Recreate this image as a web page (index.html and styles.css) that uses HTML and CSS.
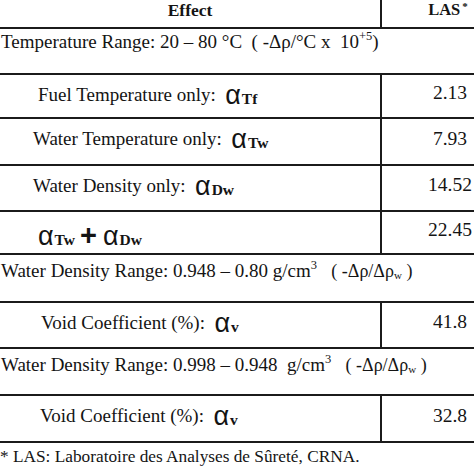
FILE: index.html
```html
<!DOCTYPE html>
<html>
<head>
<meta charset="utf-8">
<link rel="stylesheet" href="styles.css">
</head>
<body>
<div class="sheet">
  <div class="row row--head">
    <div class="cell cell--label cell--effect"><span class="txt">Effect</span></div>
    <div class="cell cell--num cell--las"><span class="txt">LAS<sup class="star">*</sup></span></div>
  </div>
  <div class="row row--span h44">
    <div class="span-text pt2">Temperature Range: 20 – 80 °C&nbsp; ( -Δρ/°C x&nbsp; 10<sup class="exp">+5</sup>)</div>
  </div>
  <div class="row h42">
    <div class="cell cell--label in38 fuel"><span class="txt">Fuel Temperature only:&nbsp;&nbsp;<span class="alpha">α</span><span class="idx">Tf</span></span></div>
    <div class="cell cell--num"><span class="txt">2.13</span></div>
  </div>
  <div class="row h45">
    <div class="cell cell--label in33"><span class="txt">Water Temperature only:&nbsp;&nbsp;<span class="alpha">α</span><span class="idx">Tw</span></span></div>
    <div class="cell cell--num"><span class="txt">7.93</span></div>
  </div>
  <div class="row h44">
    <div class="cell cell--label in33"><span class="txt">Water Density only:&nbsp;&nbsp;<span class="alpha">α</span><span class="idx">Dw</span></span></div>
    <div class="cell cell--num"><span class="txt">14.52</span></div>
  </div>
  <div class="row h41">
    <div class="cell cell--label in38 low"><span class="txt"><span class="alpha">α</span><span class="idx">Tw</span><span class="plus">+</span><span class="alpha">α</span><span class="idx">Dw</span></span></div>
    <div class="cell cell--num"><span class="txt">22.45</span></div>
  </div>
  <div class="row row--span h46">
    <div class="span-text pt5">Water Density Range: 0.948 – 0.80 g/cm<sup class="exp">3</sup>&nbsp;&nbsp; <span class="paren">( -Δρ/Δρ<sub class="w">w</sub> )</span></div>
  </div>
  <div class="row h44">
    <div class="cell cell--label in41"><span class="txt">Void Coefficient (%):&nbsp;&nbsp;<span class="alpha">α</span><span class="idx">v</span></span></div>
    <div class="cell cell--num"><span class="txt">41.8</span></div>
  </div>
  <div class="row row--span h45">
    <div class="span-text pt5">Water Density Range: 0.998 – 0.948&nbsp; g/cm<sup class="exp">3</sup>&nbsp;&nbsp; <span class="paren">( -Δρ/Δρ<sub class="w">w</sub> )</span></div>
  </div>
  <div class="row h45">
    <div class="cell cell--label in40"><span class="txt">Void Coefficient (%):&nbsp;&nbsp;<span class="alpha">α</span><span class="idx">v</span></span></div>
    <div class="cell cell--num"><span class="txt">32.8</span></div>
  </div>
  <div class="foot">* LAS: Laboratoire des Analyses de Sûreté, CRNA.</div>
</div>
</body>
</html>
```

FILE: styles.css
```css
html, body {
  margin: 0;
  padding: 0;
  background: #ffffff;
  overflow: hidden;
}

body {
  width: 474px;
  height: 470px;
  font-family: "Liberation Serif", "Times New Roman", serif;
  color: #141414;
}

.sheet {
  width: 518px;
}

.row {
  display: flex;
  border-bottom: 2px solid #1b1b1b;
  box-sizing: content-box;
}

.row--head { height: 27px; }
.h41 { height: 41px; }
.h42 { height: 42px; }
.h44 { height: 44px; }
.h45 { height: 45px; }
.h46 { height: 46px; }

.cell {
  display: flex;
  align-items: center;
  font-size: 19px;
  line-height: 22px;
  white-space: nowrap;
}

.txt {
  display: block;
}

.cell--label {
  width: 380px;
  flex: none;
  box-sizing: border-box;
  padding-bottom: 5px;
}

.cell--label.fuel { padding-bottom: 2px; }

.cell--num {
  flex: 1;
  justify-content: center;
  border-left: 2px solid #1b1b1b;
  font-size: 19.5px;
  padding-bottom: 6px;
  box-sizing: border-box;
}

.in33 { padding-left: 33px; }
.in38 { padding-left: 38px; }
.in40 { padding-left: 40px; }
.in41 { padding-left: 41px; }

.cell--label.low { padding-top: 11px; padding-bottom: 5px; }

.cell--effect,
.cell--las {
  align-items: flex-start;
  justify-content: center;
  font-weight: bold;
  font-size: 17.5px;
  line-height: 20px;
  padding: 0;
}

.cell--las {
  font-size: 16.5px;
  padding-right: 4px;
}

.star {
  font-size: 11px;
  line-height: 0;
  vertical-align: 5px;
  margin-left: 2px;
}

.alpha {
  font-family: "Liberation Sans", Arial, sans-serif;
  font-size: 27px;
  line-height: 0;
  vertical-align: -3px;
}

.idx {
  font-weight: bold;
  font-size: 15.5px;
  line-height: 0;
  vertical-align: -3px;
  margin-left: 1px;
}

.plus {
  font-family: "Liberation Sans", Arial, sans-serif;
  font-weight: bold;
  font-size: 29px;
  line-height: 0;
  vertical-align: -3px;
  margin: 0 6px 0 5px;
}

.row--span {
  align-items: flex-start;
}

.span-text {
  font-size: 19px;
  line-height: 22px;
  padding-left: 1px;
  white-space: nowrap;
}

.pt2 { padding-top: 2px; }
.pt5 { padding-top: 5px; }

.exp {
  font-size: 12.5px;
  line-height: 0;
  vertical-align: 8px;
}

.paren {
  font-size: 18px;
}

.w {
  font-size: 11px;
  line-height: 0;
  vertical-align: -2px;
}

.foot {
  font-size: 17.3px;
  line-height: 22px;
  padding-top: 3px;
  white-space: nowrap;
}
```
